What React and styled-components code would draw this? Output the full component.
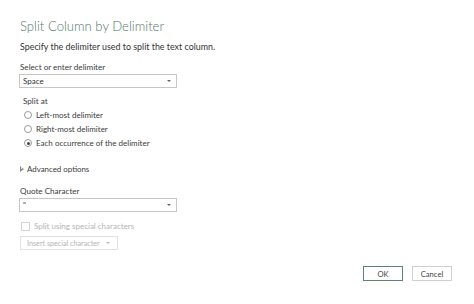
import React, {useState} from 'react'
import styled, {createGlobalStyle} from 'styled-components'

const GlobalStyle = createGlobalStyle`
  html, body {
    margin: 0;
    padding: 0;
    background: #fff;
  }
  body {
    font-family: Lato, "Open Sans", sans-serif;
    color: #3b3b3b;
  }
`

const Dialog = styled.div`
  width: 474px;
  height: 304px;
  box-sizing: border-box;
  padding: 16px 20px 0 20px;
  display: flex;
  flex-direction: column;
  background: #fff;
`

const Title = styled.h1`
  margin: 0;
  font-weight: 300;
  font-size: 13.1px;
  line-height: 20px;
  color: #52786a;
`

const Subtitle = styled.p`
  margin: 4px 0 0 0;
  font-size: 8.9px;
  line-height: 14px;
  color: #333;
`

const Label = styled.div`
  font-size: 8.1px;
  line-height: 12px;
  color: #3b3b3b;
  margin-top: ${p => p.top || 0}px;
  margin-left: ${p => p.indent || 0}px;
`

const Select = styled.div`
  width: 158px;
  height: 14px;
  box-sizing: border-box;
  border: 1px solid #c6c6c6;
  margin: 1px 0 0 -1px;
  display: flex;
  align-items: center;
  justify-content: space-between;
  padding: 0 5px 0 3px;
  font-size: 8px;
  color: #333;
`

const Caret = styled.span`
  width: 0;
  height: 0;
  border-left: 2px solid transparent;
  border-right: 2px solid transparent;
  border-top: 2px solid ${p => p.light ? '#bbb' : '#666'};
`

const RadioGroup = styled.div`
  display: flex;
  flex-direction: column;
  gap: 4px;
  margin: 3px 0 0 4px;
`

const RadioRow = styled.label`
  display: flex;
  align-items: center;
  gap: 4px;
  height: 10px;
  font-size: 8px;
  color: #3b3b3b;
  cursor: pointer;
`

const Circle = styled.span`
  width: 6px;
  height: 6px;
  border-radius: 50%;
  border: 1px solid #9a9a9a;
  display: flex;
  align-items: center;
  justify-content: center;
  &::after {
    content: '';
    width: 3px;
    height: 3px;
    border-radius: 50%;
    background: ${p => p.on ? '#444' : 'transparent'};
  }
`

const Toggle = styled.div`
  display: flex;
  align-items: center;
  gap: 3px;
  margin-top: 16px;
  font-size: 7.9px;
  color: #3b3b3b;
`

const Triangle = styled.span`
  width: 0;
  height: 0;
  border-top: 3px solid transparent;
  border-bottom: 3px solid transparent;
  border-left: 4px solid #888;
  position: relative;
  &::after {
    content: '';
    position: absolute;
    left: -3.4px;
    top: -1.7px;
    border-top: 1.7px solid transparent;
    border-bottom: 1.7px solid transparent;
    border-left: 2.2px solid #fff;
  }
`

const CheckRow = styled.div`
  display: flex;
  align-items: center;
  gap: 4px;
  margin-top: 9px;
  font-size: 8px;
  color: #b4b4b4;
`

const Box = styled.span`
  width: 7px;
  height: 7px;
  border: 1px solid #d4d4d4;
  margin-left: 1px;
`

const GhostButton = styled.div`
  align-self: flex-start;
  margin-top: 5px;
  height: 14px;
  box-sizing: border-box;
  padding: 0 7px 0 6px;
  border: 1px solid #e2e2e2;
  display: flex;
  align-items: center;
  gap: 6px;
  font-size: 7.2px;
  color: #b4b4b4;
`

const Footer = styled.div`
  display: flex;
  justify-content: flex-end;
  gap: 9px;
  margin-top: 16px;
  padding-right: 2px;
`

const Button = styled.button`
  width: 40px;
  height: 15px;
  padding: 0;
  background: #fff;
  border: 1px solid ${p => p.primary ? '#5b8473' : '#cfcfcf'};
  font-family: inherit;
  font-size: 7.6px;
  color: #444;
  cursor: pointer;
`

const options = [
  'Left-most delimiter',
  'Right-most delimiter',
  'Each occurrence of the delimiter',
]

export default function App() {
  const [split, setSplit] = useState(2)
  return (
    <>
      <GlobalStyle />
      <Dialog>
        <Title>Split Column by Delimiter</Title>
        <Subtitle>Specify the delimiter used to split the text column.</Subtitle>

        <Label top={7}>Select or enter delimiter</Label>
        <Select>
          <span>Space</span>
          <Caret />
        </Select>

        <Label top={7} indent={3}>Split at</Label>
        <RadioGroup>
          {options.map((o, i) => (
            <RadioRow key={o} onClick={() => setSplit(i)}>
              <Circle on={split === i} />
              {o}
            </RadioRow>
          ))}
        </RadioGroup>

        <Toggle>
          <Triangle />
          Advanced options
        </Toggle>

        <Label top={11}>Quote Character</Label>
        <Select>
          <span>"</span>
          <Caret />
        </Select>

        <CheckRow>
          <Box />
          Split using special characters
        </CheckRow>
        <GhostButton>
          Insert special character
          <Caret light />
        </GhostButton>

        <Footer>
          <Button primary>OK</Button>
          <Button>Cancel</Button>
        </Footer>
      </Dialog>
    </>
  )
}
